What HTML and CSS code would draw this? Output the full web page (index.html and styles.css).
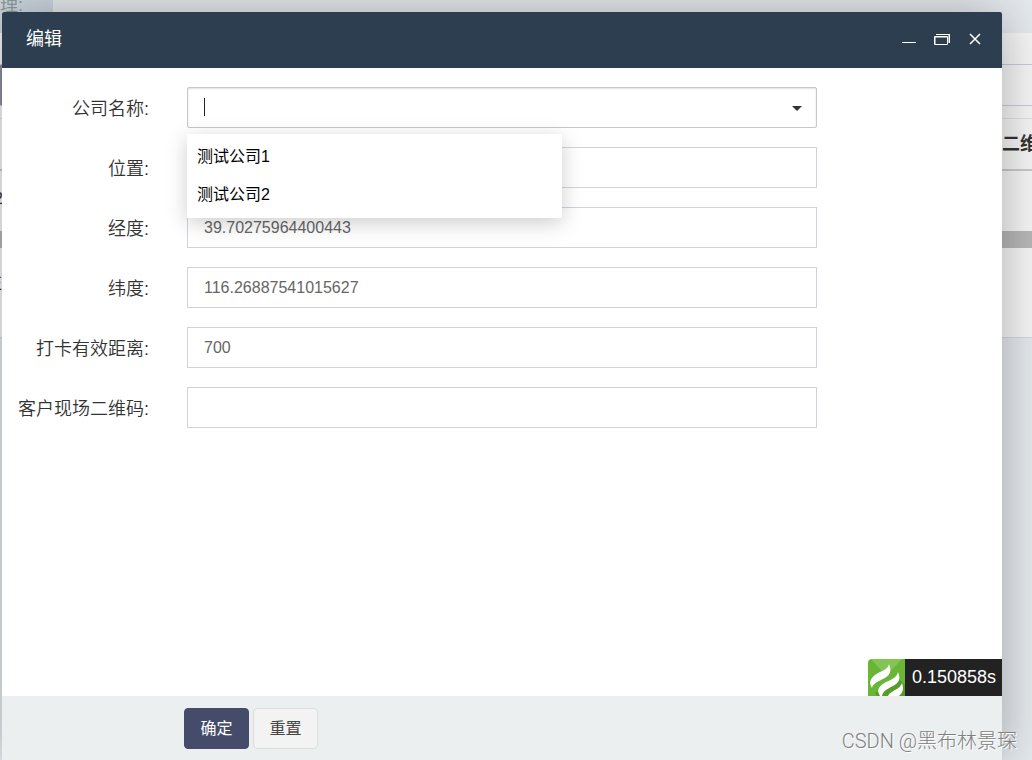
FILE: index.html
```html
<!DOCTYPE html>
<html lang="zh-CN">
  <head>
    <meta charset="UTF-8" />
    <meta name="viewport" content="width=device-width, initial-scale=1.0" />
    <title>编辑</title>
    <link rel="stylesheet" href="styles.css">
  </head>
  <body>
    <div class="page">
      <div class="page-top"><span class="page-tab">理:</span></div>
      <div class="page-panel">
        <div class="panel-title"></div>
        <div class="panel-toolbar"><span class="toolbar-button"></span></div>
        <div class="panel-gap"></div>
        <div class="table-head">二维</div>
        <div class="table-row"><span>2</span></div>
        <div class="table-scroll"></div>
        <div class="table-pager"><span>正</span></div>
      </div>
    </div>

    <div class="dialog" role="dialog" aria-labelledby="dialog-title">
      <div class="dialog-header">
        <h1 class="dialog-title" id="dialog-title">编辑</h1>
        <div class="dialog-tools">
          <button type="button" aria-label="最小化">
            <svg width="18" height="18" viewBox="0 0 18 18"><path d="M2 12.5h14" /></svg>
          </button>
          <button type="button" aria-label="最大化">
            <svg width="18" height="18" viewBox="0 0 18 18">
              <path d="M1.500 6.500h13v8h-13z" />
              <path d="M3 4.500h14M16.500 4v9" />
              <path class="faint" d="M2.500 7v7M15.500 5v8M2 7.500h12" />
            </svg>
          </button>
          <button type="button" aria-label="关闭">
            <svg width="18" height="18" viewBox="0 0 18 18"><path class="cross" d="M4 4l10 10M14 4L4 14" /></svg>
          </button>
        </div>
      </div>

      <form class="dialog-form" id="edit-form">
        <div class="form-body">
          <div class="form-row">
            <label for="company">公司名称:</label>
            <div class="combo">
              <input class="form-input combo-input" id="company" type="text" autocomplete="off" />
              <span class="combo-cursor"></span>
              <span class="combo-arrow"></span>
              <ul class="combo-menu">
                <li>测试公司1</li>
                <li>测试公司2</li>
              </ul>
            </div>
          </div>
          <div class="form-row">
            <label for="address">位置:</label>
            <input class="form-input" id="address" type="text" />
          </div>
          <div class="form-row">
            <label for="lng">经度:</label>
            <input class="form-input" id="lng" type="text" value="39.70275964400443" />
          </div>
          <div class="form-row">
            <label for="lat">纬度:</label>
            <input class="form-input" id="lat" type="text" value="116.26887541015627" />
          </div>
          <div class="form-row">
            <label for="distance">打卡有效距离:</label>
            <input class="form-input" id="distance" type="text" value="700" />
          </div>
          <div class="form-row">
            <label for="qrcode">客户现场二维码:</label>
            <input class="form-input" id="qrcode" type="text" />
          </div>
        </div>

        <div class="trace">
          <svg class="trace-logo" width="37" height="37" viewBox="0 0 37 37">
            <path fill="#69b536" d="M0 0h37v37H0z" />
            <path fill="#82c455" d="M3 0h31L18 17z" />
            <path fill="#559c29" d="M7 34L31 20l6 6v11H9z" />
            <path fill="#fff" d="M21 5c3 7 1 11-4 14-6 3-12 5-13 10-4-6-1-11 6-15 6-3 10-4 11-9z" />
            <path fill="#fff" d="M30 13c3 7 1 11-5 14-6 3-10 5-11 10h-2c-4-6-1-10 6-14 7-3 11-5 12-10z" />
            <path fill="#fff" d="M34 24c2 6 1 9-3 13H20c1-3 4-4 7-6 4-2 6-4 7-7z" />
          </svg>
          <span class="trace-time">0.150858s</span>
        </div>

        <div class="form-footer">
          <button type="submit" class="btn btn-primary">确定</button>
          <button type="reset" class="btn">重置</button>
        </div>
      </form>
    </div>

    <div class="watermark">CSDN @黑布林景琛</div>
  </body>
</html>
```
FILE: styles.css
```css
* {
  box-sizing: border-box;
}
body {
  margin: 0;
  height: 100vh;
  overflow: hidden;
  position: relative;
  font-family: "Liberation Sans", "Noto Sans CJK SC", sans-serif;
  font-size: 16px;
  color: #333;
  background-color: #e5eaee;
}

/* list page behind the dialog */
.page-top {
  height: 33px;
}
.page-tab {
  display: block;
  width: 53px;
  height: 33px;
  font-size: 18px;
  line-height: 10px;
  color: #8d9b9b;
  background-color: #cdd6e0;
}
.page-panel {
  background-color: #f6f6f6;
  border-bottom: 1px solid #d5d9dc;
}
.panel-title {
  height: 32px;
  border-bottom: 1px solid #c9ccd8;
}
.panel-toolbar {
  height: 41px;
  border-bottom: 1px solid #c9ccd8;
}
.toolbar-button {
  display: block;
  width: 60px;
  height: 40px;
  background-color: #8f8fa5;
}
.panel-gap {
  height: 13px;
  border-bottom: 1px solid #e2e2e2;
}
.table-head {
  height: 52px;
  padding-left: calc(100% - 30px);
  border-bottom: 2px solid #cacaca;
  overflow: hidden;
  white-space: nowrap;
  font-size: 18px;
  font-weight: bold;
  line-height: 50px;
}
.table-row {
  height: 60px;
  line-height: 56px;
}
.table-row span {
  margin-left: -6px;
}
.table-scroll {
  height: 17px;
  background-color: #b8b8b8;
}
.table-pager {
  height: 89px;
  line-height: 72px;
}
.table-pager span {
  margin-left: -14px;
}

.dialog {
  position: absolute;
  top: 12px;
  right: 30px;
  bottom: 0;
  left: 2px;
  display: flex;
  flex-direction: column;
  background-color: #fff;
  border-radius: 2px;
  box-shadow: 1px 1px 50px rgba(0, 0, 0, 0.3);
}
.dialog-header {
  display: flex;
  justify-content: space-between;
  align-items: center;
  height: 56px;
  padding: 0 18px 2px 24px;
  color: #fff;
  background-color: #2d3e50;
  border-radius: 2px 2px 0 0;
}
.dialog-title {
  margin: 0;
  font-size: 18px;
  font-weight: normal;
  line-height: 24px;
}
.dialog-tools {
  display: flex;
  gap: 15px;
}
.dialog-tools button {
  display: block;
  width: 18px;
  height: 18px;
  padding: 0;
  border: none;
  background: none;
}
.dialog-tools svg {
  display: block;
  fill: none;
  stroke: #fff;
}
.dialog-tools .faint {
  stroke-opacity: 0.5;
}
.dialog-tools .cross {
  stroke-width: 1.5;
}

.dialog-form {
  flex: 1;
  display: flex;
  flex-direction: column;
}
.form-body {
  flex: 1;
  display: flex;
  flex-direction: column;
  gap: 19px;
  padding-top: 19px;
}
.form-row {
  display: grid;
  grid-template-columns: 147px 63%;
  column-gap: 38px;
  align-items: center;
}
.form-row label {
  padding-top: 2px;
  font-size: 18px;
  font-weight: 350;
  line-height: 24px;
  text-align: right;
  white-space: nowrap;
}
.form-input {
  width: 100%;
  height: 41px;
  padding: 0 16px;
  border: 1px solid #d2d2dc;
  border-radius: 0;
  outline: none;
  font-family: inherit;
  font-size: 16px;
  color: #666;
  background-color: #fff;
}

.combo {
  position: relative;
}
.combo-input {
  display: block;
  border-color: #c8c8c8;
  border-radius: 2px;
  box-shadow: inset 0 1px 2px rgba(0, 0, 0, 0.12);
}
.combo-cursor {
  position: absolute;
  top: 11px;
  left: 17px;
  width: 1px;
  height: 18px;
  background-color: #222;
}
.combo-arrow {
  position: absolute;
  top: 19px;
  right: 15px;
  border: 5px solid transparent;
  border-top-color: #333;
  border-bottom: none;
}
.combo-menu {
  position: absolute;
  top: 47px;
  left: 0;
  z-index: 1;
  width: 375px;
  margin: 0;
  padding: 4px 0;
  list-style: none;
  color: #000;
  background-color: #fff;
  box-shadow: 0 5px 20px rgba(0, 0, 0, 0.2);
}
.combo-menu li {
  padding: 0 10px;
  line-height: 38px;
}

.trace {
  display: flex;
  align-self: flex-end;
  height: 37px;
  border-radius: 4px 0 0 0;
  overflow: hidden;
}
.trace-logo {
  display: block;
}
.trace-time {
  padding: 0 6px 0 7px;
  font-size: 18px;
  line-height: 36px;
  color: #fff;
  background-color: #222;
}

.form-footer {
  display: flex;
  gap: 4px;
  height: 64px;
  padding: 12px 182px;
  background-color: #ebeff0;
}
.btn {
  width: 65px;
  height: 41px;
  padding: 0 0 3px;
  border: 1px solid #ddd;
  border-radius: 4px;
  font-family: inherit;
  font-size: 16px;
  color: #444;
  background-color: #f3f3f3;
  cursor: pointer;
}
.btn-primary {
  border-color: #444c69;
  color: #fff;
  background-color: #444c69;
}

.watermark {
  position: absolute;
  right: 15px;
  bottom: 4px;
  font-family: Roboto, "Noto Sans CJK SC", sans-serif;
  font-size: 20px;
  font-weight: 300;
  line-height: 30px;
  color: #808080;
  text-shadow: 1px 1px 0 #fff;
}
```
